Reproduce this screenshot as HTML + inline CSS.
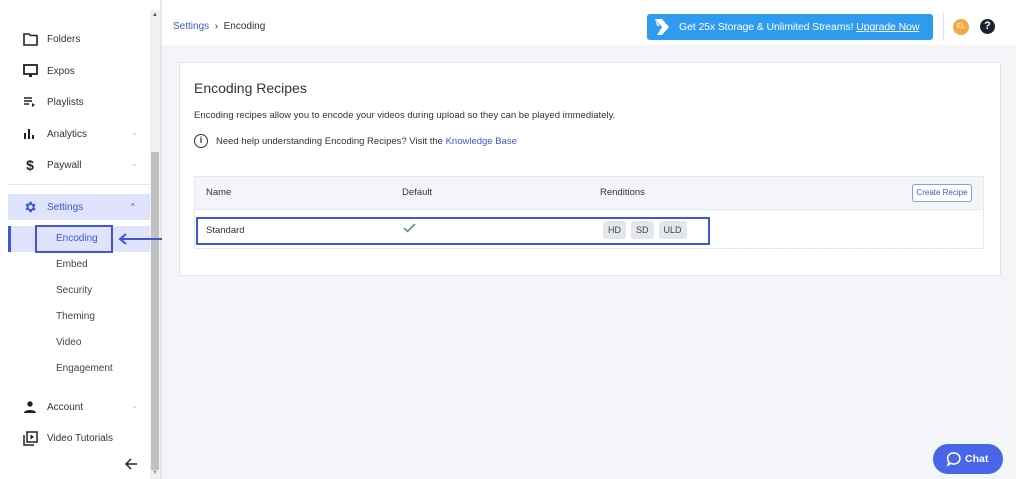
<!DOCTYPE html>
<html><head><meta charset="utf-8"><style>
*{box-sizing:border-box;margin:0;padding:0}
body{width:1024px;height:479px;overflow:hidden;background:#fff;font-family:"Liberation Sans",sans-serif;position:relative;color:#333}
.abs{position:absolute}
.nav{position:absolute;left:22px;font-size:10px;color:#333;display:flex;align-items:center}
.nav .ic{width:16px;height:16px;margin-right:9px;display:flex;align-items:center;justify-content:center}
.sub{position:absolute;left:56px;font-size:10px;color:#444}
.chev{position:absolute;left:131px;font-size:8px;color:#bbb}
.tag{display:inline-block;background:#e3e6ec;border-radius:3px;font-size:9px;color:#444;padding:4px 5px;margin-right:5px}
</style></head><body>
<div class="abs" style="left:0;top:0;width:150px;height:479px;background:#fff"></div>
<div class="abs" style="left:150px;top:10px;width:10px;height:469px;background:#f0f0f0"></div>
<div class="abs" style="left:151px;top:152px;width:8px;height:318px;background:#c1c1c1"></div>
<div class="abs" style="left:160px;top:0;width:2px;height:479px;background:#e6e7eb"></div>
<div class="abs" style="left:152px;top:12px;font-size:6px;color:#555">▲</div>
<div class="abs" style="left:152px;top:470px;font-size:6px;color:#999">▼</div>

<div class="nav" style="top:31px"><div class="ic"><svg width="15" height="13" viewBox="0 0 15 13"><path d="M1 1h5l1.5 1.5H14V12H1z" fill="none" stroke="#222" stroke-width="1.6"/></svg></div>Folders</div>
<div class="nav" style="top:63px"><div class="ic"><svg width="15" height="14" viewBox="0 0 15 14"><rect x="1" y="1" width="13" height="9" fill="none" stroke="#222" stroke-width="1.8"/><rect x="6" y="10" width="3" height="3" fill="#222"/></svg></div>Expos</div>
<div class="nav" style="top:94px"><div class="ic"><svg width="12" height="10" viewBox="0 0 12 10"><path d="M0 1h8M0 4h8M0 7h5" stroke="#222" stroke-width="1.4"/><path d="M8 6l3 2-3 2z" fill="#222"/></svg></div>Playlists</div>
<div class="nav" style="top:126px"><div class="ic"><svg width="12" height="10" viewBox="0 0 12 10"><rect x="0" y="4" width="2" height="6" fill="#222"/><rect x="4" y="0" width="2" height="10" fill="#222"/><rect x="8" y="6" width="2" height="4" fill="#222"/></svg></div>Analytics</div>
<div class="chev" style="top:128px">⌄</div>
<div class="nav" style="top:157px"><div class="ic" style="font-size:14px;font-weight:bold;color:#222">$</div>Paywall</div>
<div class="chev" style="top:159px">⌄</div>
<div class="abs" style="left:8px;top:184px;width:142px;height:1px;background:#e6e6e6"></div>
<div class="abs" style="left:8px;top:194px;width:142px;height:26px;background:#dfe3fb"></div>
<div class="nav" style="top:199px;color:#3e57d6"><div class="ic"><svg width="14" height="14" viewBox="0 0 24 24"><path fill="#3e57d6" d="M19.4 13a7.5 7.5 0 000-2l2.1-1.6-2-3.5-2.5 1a7.7 7.7 0 00-1.7-1L15 3h-4l-.4 2.7a7.7 7.7 0 00-1.7 1l-2.5-1-2 3.5L6.5 11a7.5 7.5 0 000 2l-2.1 1.6 2 3.5 2.5-1a7.7 7.7 0 001.7 1L11 21h4l.4-2.7a7.7 7.7 0 001.7-1l2.5 1 2-3.5zM13 15.5A3.5 3.5 0 1113 8.5a3.5 3.5 0 010 7z"/></svg></div>Settings</div>
<div class="chev" style="top:202px;color:#3e57d6">^</div>
<div class="abs" style="left:8px;top:226px;width:142px;height:26px;background:#dfe3fb"></div>
<div class="abs" style="left:8px;top:226px;width:3px;height:26px;background:#3e57d6"></div>
<div class="abs" style="left:35px;top:225px;width:78px;height:28px;border:2px solid #3e57d6"></div>
<div class="sub" style="top:233px;color:#3e57d6">Encoding</div>
<div class="sub" style="top:259px">Embed</div>
<div class="sub" style="top:285px">Security</div>
<div class="sub" style="top:311px">Theming</div>
<div class="sub" style="top:337px">Video</div>
<div class="sub" style="top:363px">Engagement</div>
<div class="nav" style="top:399px"><div class="ic"><svg width="12" height="12" viewBox="0 0 12 12"><circle cx="6" cy="3" r="2.7" fill="#222"/><path d="M0 12c0-4 12-4 12 0z" fill="#222"/></svg></div>Account</div>
<div class="chev" style="top:401px">⌄</div>
<div class="nav" style="top:430px"><div class="ic"><svg width="15" height="15" viewBox="0 0 15 15"><rect x="4" y="1" width="10" height="10" fill="none" stroke="#222" stroke-width="1.5"/><path d="M1 4v10h10" fill="none" stroke="#222" stroke-width="1.5"/><path d="M7.5 3.5v5l3.5-2.5z" fill="#222"/></svg></div>Video Tutorials</div>
<svg class="abs" style="left:125px;top:458px" width="13" height="12" viewBox="0 0 13 12"><path d="M12 6H2M6 1L1 6l5 5" fill="none" stroke="#222" stroke-width="1.5"/></svg>

<div class="abs" style="left:122px;top:238px;width:56px;height:2px;background:#3e57d6"></div>
<svg class="abs" style="left:118px;top:233px" width="10" height="12" viewBox="0 0 10 12"><path d="M8 1L2 6l6 5" fill="none" stroke="#3e57d6" stroke-width="2"/></svg>

<div class="abs" style="left:173px;top:21px;font-size:10px;color:#3e57d6">Settings <span style="color:#333">&nbsp;›&nbsp; Encoding</span></div>
<div class="abs" style="left:647px;top:14px;width:286px;height:26px;background:#2e9bf0;border-radius:3px;color:#fff;font-size:10.5px;line-height:26px;padding-left:32px;white-space:nowrap;letter-spacing:-0.1px">Get 25x Storage &amp; Unlimited Streams! <u>Upgrade Now</u></div>
<svg class="abs" style="left:655px;top:19px" width="14" height="16" viewBox="0 0 14 16"><path d="M0 0h7l7 8-7 8H2l5-8z" fill="#fff"/><path d="M0 0l5 7H2z" fill="#d8ecfc"/></svg>
<div class="abs" style="left:943px;top:13px;width:1px;height:28px;background:#e3e3e3"></div>
<div class="abs" style="left:953px;top:19px;width:16px;height:16px;border-radius:50%;background:#f6a940;color:#fff;font-size:7px;line-height:16px;text-align:center">EL</div>
<div class="abs" style="left:980px;top:19px;width:15px;height:15px;border-radius:50%;background:#1d2130;color:#fff;font-size:11px;font-weight:bold;line-height:15px;text-align:center">?</div>

<div class="abs" style="left:162px;top:45px;width:854px;height:434px;background:#f4f5f9"></div>
<div class="abs" style="left:179px;top:62px;width:822px;height:214px;background:#fff;border:1px solid #e3e5ea"></div>
<div class="abs" style="left:194px;top:80px;font-size:14px;color:#333">Encoding Recipes</div>
<div class="abs" style="left:194px;top:110px;font-size:9.5px;color:#333">Encoding recipes allow you to encode your videos during upload so they can be played immediately.</div>
<div class="abs" style="left:194px;top:134px;width:14px;height:14px;border:1.5px solid #333;border-radius:50%;font-size:9px;line-height:11px;text-align:center;font-weight:bold">i</div>
<div class="abs" style="left:216px;top:136px;font-size:9.5px;color:#333">Need help understanding Encoding Recipes? Visit the <span style="color:#3e57d6">Knowledge Base</span></div>
<div class="abs" style="left:194px;top:176px;width:790px;height:73px;border:1px solid #e6e8ed"></div>
<div class="abs" style="left:195px;top:177px;width:788px;height:33px;background:#f4f5f9;border-bottom:1px solid #e6e8ed"></div>
<div class="abs" style="left:206px;top:187px;font-size:9.5px;color:#333">Name</div>
<div class="abs" style="left:402px;top:187px;font-size:9.5px;color:#333">Default</div>
<div class="abs" style="left:600px;top:187px;font-size:9.5px;color:#333">Renditions</div>
<div class="abs" style="left:912px;top:184px;width:60px;height:18px;border:1px solid #8e9be8;border-radius:3px;background:#fff;font-size:8px;color:#3e57d6;text-align:center;line-height:16px">Create Recipe</div>
<div class="abs" style="left:196px;top:217px;width:514px;height:28px;border:2px solid #3e57d6"></div>
<div class="abs" style="left:206px;top:225px;font-size:9.5px;color:#333">Standard</div>
<svg class="abs" style="left:403px;top:223px" width="13" height="10" viewBox="0 0 13 10"><path d="M1 5l3.5 3.5L12 1" fill="none" stroke="#2e9e5b" stroke-width="1.5"/></svg>
<div class="abs" style="left:603px;top:220px"><span class="tag">HD</span><span class="tag">SD</span><span class="tag">ULD</span></div>

<div class="abs" style="left:933px;top:444px;width:70px;height:30px;border-radius:15px;background:#4a66e8;color:#fff;font-size:10.5px;font-weight:bold;line-height:30px;padding-left:32px">Chat</div>
<svg class="abs" style="left:946px;top:451px" width="16" height="16" viewBox="0 0 16 16"><path d="M8 2a6 5.5 0 11-3 10.3L2 14l1-3A5.5 5.5 0 018 2z" fill="none" stroke="#fff" stroke-width="1.6"/></svg>
</body></html>
